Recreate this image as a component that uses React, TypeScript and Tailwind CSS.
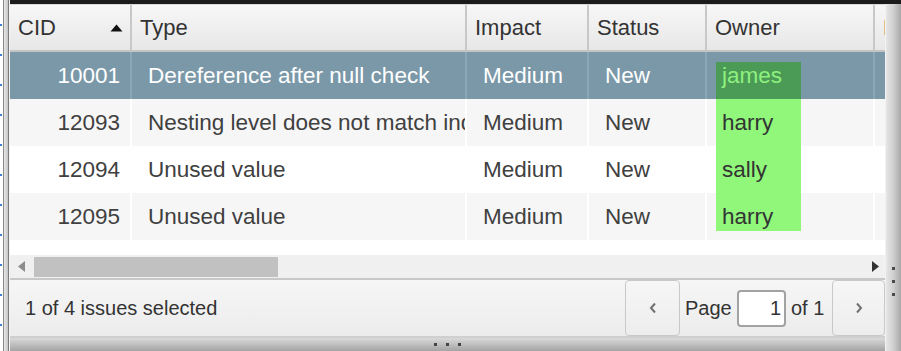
import React from 'react';

type Col = { key: string; label: string; w: number; align?: 'right' };

const COLS: Col[] = [
    { key: 'cid', label: 'CID', w: 122, align: 'right' },
    { key: 'type', label: 'Type', w: 335 },
    { key: 'impact', label: 'Impact', w: 122 },
    { key: 'status', label: 'Status', w: 118 },
    { key: 'owner', label: 'Owner', w: 168 },
    { key: 'legacy', label: 'Legacy', w: 120 },
];

const ROWS = [
    { cid: '10001', type: 'Dereference after null check', impact: 'Medium', status: 'New', owner: 'james', legacy: 'False' },
    { cid: '12093', type: 'Nesting level does not match indentation', impact: 'Medium', status: 'New', owner: 'harry', legacy: 'False' },
    { cid: '12094', type: 'Unused value', impact: 'Medium', status: 'New', owner: 'sally', legacy: 'False' },
    { cid: '12095', type: 'Unused value', impact: 'Medium', status: 'New', owner: 'harry', legacy: 'False' },
];

const SELECTED = 0;

function SortUp() {
    return (
        <svg width="13" height="8" viewBox="0 0 13 8">
            <path d="M6.5 0.5 L12.5 7.5 L0.5 7.5 Z" fill="#111" />
        </svg>
    );
}

function Chevron({ dir }: { dir: 'left' | 'right' }) {
    return (
        <svg width="8" height="12" viewBox="0 0 8 12">
            <path
                d={dir === 'left' ? 'M6 1.5 L2 6 L6 10.5' : 'M2 1.5 L6 6 L2 10.5'}
                fill="none"
                stroke="#707070"
                strokeWidth="2"
            />
        </svg>
    );
}

export default function App() {
    return (
        <div
            className="flex w-[901px] h-[351px] bg-white overflow-hidden"
            style={{ fontFamily: '"Liberation Sans", Arial, sans-serif' }}
        >
            {/* left splitter strip */}
            <div className="flex w-[10px] h-full shrink-0">
                <div className="w-[3px] h-full flex flex-col items-start pt-[24px] gap-[28px]">
                    {Array.from({ length: 11 }).map((_, i) => (
                        <div key={i} className="w-[2px] h-[2px] bg-[#3b7fd6]" />
                    ))}
                </div>
                <div className="w-[1px] h-full bg-[#8a8a8a]" />
                <div className="w-[4px] h-full bg-gradient-to-r from-[#e6e6e6] to-[#c6c6c6]" />
                <div className="w-[1px] h-full bg-[#7a7a7a]" />
                <div className="w-[1px] h-full bg-[#f4f4f4]" />
            </div>

            <div className="flex flex-col flex-1 min-w-0">
                <div className="h-[4px] bg-[#1b1b1b] shrink-0" />

                <div className="flex flex-1 min-h-0">
                    {/* grid panel */}
                    <div className="flex flex-col w-[875px] shrink-0 overflow-hidden">
                        {/* header */}
                        <div className="flex h-[48px] shrink-0 border-b-2 border-[#c4c4c4] bg-gradient-to-b from-[#f7f7f7] to-[#e7e7e7] border-t border-t-[#d8d8d8]">
                            {COLS.map(c => (
                                <div
                                    key={c.key}
                                    style={{ width: c.w }}
                                    className="shrink-0 flex items-center justify-between pl-[8px] pr-[7px] border-r-2 border-[#c8c8c8] text-[22px] text-[#333] whitespace-nowrap overflow-hidden"
                                >
                                    <span>{c.label}</span>
                                    {c.key === 'cid' && <SortUp />}
                                </div>
                            ))}
                        </div>

                        {/* rows */}
                        {ROWS.map((r, i) => {
                            const sel = i === SELECTED;
                            const bg = sel ? 'bg-[#7b98a8]' : i % 2 === 1 ? 'bg-[#f6f6f6]' : 'bg-white';
                            const sep = sel ? 'border-[#8ba6b5]' : 'border-white';
                            const txt = sel ? 'text-white' : 'text-[#404040]';
                            const first = i === 0;
                            const last = i === ROWS.length - 1;
                            return (
                                <div key={r.cid} className={`flex h-[47px] shrink-0 ${bg}`}>
                                    {COLS.map(c => {
                                        const value = (r as Record<string, string>)[c.key];
                                        if (c.key === 'owner') {
                                            return (
                                                <div
                                                    key={c.key}
                                                    style={{ width: c.w }}
                                                    className={`shrink-0 flex border-r-2 ${sep} pl-[9px]`}
                                                >
                                                    <div
                                                        className={`w-[85px] flex items-center pl-[6px] text-[22.5px] ${
                                                            sel ? 'bg-[#4b9b56] text-[#8ff07f]' : 'bg-[#90f77b] text-[#333]'
                                                        } ${first ? 'mt-[10px] pb-[10px]' : ''} ${last ? 'mb-[9px] pt-[9px]' : ''}`}
                                                    >
                                                        {value}
                                                    </div>
                                                </div>
                                            );
                                        }
                                        return (
                                            <div
                                                key={c.key}
                                                style={{ width: c.w }}
                                                className={`shrink-0 flex items-center border-r-2 ${sep} ${txt} text-[22.5px] whitespace-nowrap overflow-hidden ${
                                                    c.align === 'right' ? 'justify-end pr-[10px]' : 'pl-[16px]'
                                                }`}
                                            >
                                                {value}
                                            </div>
                                        );
                                    })}
                                </div>
                            );
                        })}

                        <div className="h-[15px] shrink-0 bg-white" />

                        {/* horizontal scrollbar */}
                        <div className="flex items-center h-[23px] shrink-0 bg-[#f0f0f0]">
                            <div className="w-[24px] flex justify-end pr-[9px]">
                                <svg width="7" height="11" viewBox="0 0 7 11">
                                    <path d="M7 0 L0 5.5 L7 11 Z" fill="#8c8c8c" />
                                </svg>
                            </div>
                            <div className="w-[244px] h-[20px] bg-[#c1c1c1]" />
                            <div className="flex-1" />
                            <div className="w-[13px] flex">
                                <svg width="7" height="11" viewBox="0 0 7 11">
                                    <path d="M0 0 L7 5.5 L0 11 Z" fill="#333" />
                                </svg>
                            </div>
                        </div>

                        {/* footer */}
                        <div className="flex items-stretch h-[60px] shrink-0 border-t-2 border-t-[#c8c8c8] border-b-2 border-b-[#cfcfcf] bg-gradient-to-b from-[#f6f6f6] to-[#ececec]">
                            <div className="flex-1 flex items-center pl-[15px] text-[20px] text-[#333]">
                                1 of 4 issues selected
                            </div>
                            <div className="flex items-stretch text-[20px] text-[#333]">
                                <button className="w-[55px] flex items-center justify-center border border-[#c8c8c8] rounded-[4px] bg-gradient-to-b from-[#f6f6f6] to-[#ededed]">
                                    <Chevron dir="left" />
                                </button>
                                <span className="w-[47px] flex items-center ml-[5px]">Page</span>
                                <div className="flex items-center ml-[5px]">
                                    <div className="w-[49px] h-[37px] border-2 border-[#a2a2a2] rounded-[4px] bg-white flex items-center justify-end pr-[3px]">
                                        1
                                    </div>
                                </div>
                                <span className="w-[35px] flex items-center ml-[5px]">of 1</span>
                                <button className="w-[53px] ml-[6px] flex items-center justify-center border border-[#c8c8c8] rounded-[4px] bg-gradient-to-b from-[#f6f6f6] to-[#ededed]">
                                    <Chevron dir="right" />
                                </button>
                            </div>
                        </div>

                        {/* bottom splitter */}
                        <div className="flex-1 flex items-center justify-center gap-[9px] bg-gradient-to-b from-[#dadada] to-[#a4a4a4]">
                            <div className="w-[3px] h-[3px] bg-[#444]" />
                            <div className="w-[3px] h-[3px] bg-[#444]" />
                            <div className="w-[3px] h-[3px] bg-[#444]" />
                        </div>
                    </div>

                    {/* right splitter */}
                    <div className="flex-1 flex flex-col items-center justify-start gap-[10px] pt-[263px] border-l border-[#f2f2f2] bg-gradient-to-r from-[#e6e6e6] via-[#cfcfcf] to-[#a8a8a8]">
                        <div className="w-[3px] h-[3px] bg-[#4a4a4a]" />
                        <div className="w-[3px] h-[3px] bg-[#4a4a4a]" />
                        <div className="w-[3px] h-[3px] bg-[#4a4a4a]" />
                    </div>
                </div>
            </div>
        </div>
    );
}
